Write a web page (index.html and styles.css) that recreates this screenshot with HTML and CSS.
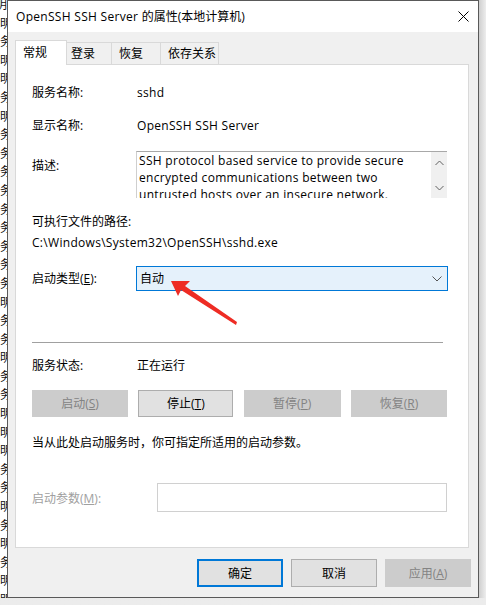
FILE: index.html
```html
<!DOCTYPE html>
<html lang="zh-CN">
<head>
<meta charset="utf-8">
<title>OpenSSH SSH Server 的属性(本地计算机)</title>
<link rel="stylesheet" href="styles.css">
</head>
<body>
<div class="desk">
  <div class="strip">明<br>明<br>务<br>明<br>明<br>务<br>明<br>务<br>务<br>务<br>务<br>务<br>务<br>务<br>务<br>务<br>明<br>务<br>务<br>明<br>务<br>务<br>明<br>明<br>明<br>务<br>务<br>明<br>务<br>明<br>务<br>明<br>明</div>
  <div class="window">
    <div class="titlebar">
      <span class="title"><span class="en">OpenSSH SSH Server </span>的属性(本地计算机)</span>
      <svg class="close" width="11" height="11" viewBox="0 0 11 11"><path d="M0.5 0.5 L10.5 10.5 M10.5 0.5 L0.5 10.5" stroke="#000" stroke-width="1" fill="none"/></svg>
    </div>
    <div class="client">
      <div class="tabs">
        <div class="tab sel t1">常规</div>
        <div class="tab t2">登录</div>
        <div class="tab t3">恢复</div>
        <div class="tab t4">依存关系</div>
      </div>
      <div class="panel">
        <div class="row">
          <span class="lbl">服务名称:</span><span class="val en">sshd</span>
        </div>
        <div class="row m16">
          <span class="lbl">显示名称:</span><span class="val en">OpenSSH SSH Server</span>
        </div>
        <div class="row m17">
          <span class="lbl desc-lbl">描述:</span>
          <div class="memo">
            <div class="memo-text en">SSH protocol based service to provide secure<br>encrypted communications between two<br>untrusted hosts over an insecure network.</div>
            <div class="memo-scroll">
              <svg width="9" height="6" viewBox="0 0 9 6"><path d="M0.5 5 L4.5 1 L8.5 5" stroke="#606060" fill="none"/></svg>
              <svg width="9" height="6" viewBox="0 0 9 6"><path d="M0.5 1 L4.5 5 L8.5 1" stroke="#606060" fill="none"/></svg>
            </div>
          </div>
        </div>
        <div class="line m15">可执行文件的路径:</div>
        <div class="line m4 en">C:\Windows\System32\OpenSSH\sshd.exe</div>
        <div class="row combo-row m15">
          <span class="lbl">启动类型(<u>E</u>):</span>
          <div class="combo">
            <span>自动</span>
            <svg width="10" height="6" viewBox="0 0 10 6"><path d="M0.5 0.5 L5 5 L9.5 0.5" stroke="#555" fill="none"/></svg>
          </div>
        </div>
        <div class="sep"></div>
        <div class="row m14">
          <span class="lbl">服务状态:</span><span class="val">正在运行</span>
        </div>
        <div class="svc-buttons">
          <div class="btn disabled">启动(<u>S</u>)</div>
          <div class="btn">停止(<u>T</u>)</div>
          <div class="btn disabled">暂停(<u>P</u>)</div>
          <div class="btn disabled">恢复(<u>R</u>)</div>
        </div>
        <div class="line m17">当从此处启动服务时，你可指定所适用的启动参数。</div>
        <div class="params">
          <span class="lbl grey">启动参数(<u>M</u>):</span>
          <div class="input"></div>
        </div>
      </div>
      <div class="actions">
        <div class="btn dlg default">确定</div>
        <div class="btn dlg">取消</div>
        <div class="btn dlg disabled">应用(<u>A</u>)</div>
      </div>
    </div>
  </div>
  <div class="shadow"></div>
</div>
<svg class="arrow" width="486" height="605" viewBox="0 0 486 605">
  <polygon points="171,281 190,281 185,286 237,322 236,325 181,290 178,296" fill="#ee2c24"/>
</svg>
</body>
</html>
```
FILE: styles.css
```css
html, body {
  margin: 0;
  padding: 0;
  width: 486px;
  height: 605px;
  overflow: hidden;
}
body {
  position: relative;
  background: linear-gradient(#d9d9d9, #ececec);
  font-family: "Open Sans", "Noto Sans CJK SC", sans-serif;
  font-size: 12px;
  color: #000;
}
u { text-decoration: underline; text-underline-offset: 1px; }
.en { letter-spacing: 0.3px; }

.desk {
  display: grid;
  grid-template-columns: 7px 472px 7px;
  height: 598px;
}
.strip {
  background: #fff;
  overflow: hidden;
  font-family: "Noto Sans CJK SC", sans-serif;
  font-size: 12px;
  line-height: 18.6px;
  text-indent: -5px;
  margin-top: -5px;
  color: #111;
  white-space: nowrap;
}
.shadow {
  background: linear-gradient(to right, #cfcfcf, #ededed);
}

.window {
  box-sizing: border-box;
  height: 598px;
  border: 1px solid #595959;
  background: #f0f0f0;
  display: flex;
  flex-direction: column;
}
.titlebar {
  height: 31px;
  flex: none;
  background: #fff;
  display: flex;
  align-items: center;
  justify-content: space-between;
  padding: 0 9px 1px 8px;
  box-sizing: border-box;
}
.title { line-height: 17px; }
.close { display: block; margin-top: 1px; }

.client {
  flex: 1;
  padding: 8px 7px 0 7px;
}
.tabs {
  display: flex;
  align-items: flex-start;
  height: 24px;
}
.tab {
  box-sizing: border-box;
  height: 22px;
  margin-top: 2px;
  line-height: 21px;
  background: #f0f0f0;
  border-top: 1px solid #d9d9d9;
  border-right: 1px solid #d9d9d9;
  white-space: nowrap;
}
.tab.sel {
  position: relative;
  z-index: 1;
  height: 25px;
  margin-top: 0;
  line-height: 23px;
  background: #fff;
  border-left: 1px solid #d9d9d9;
}
.t1 { width: 52px; padding-left: 7px; }
.t2 { width: 45px; padding-left: 4px; }
.t3 { width: 49px; padding-left: 7px; }
.t4 { width: 58px; padding-left: 7px; }

.panel {
  box-sizing: border-box;
  width: 454px;
  height: 484px;
  background: #fff;
  border: 1px solid #d9d9d9;
  padding: 19px 20px 0 16px;
}
.row {
  display: grid;
  grid-template-columns: 104px 1fr;
  line-height: 17px;
}
.val { padding-left: 1px; white-space: nowrap; }
.line { line-height: 17px; white-space: nowrap; }
.m4 { margin-top: 4px; }
.m14 { margin-top: 14px; }
.m15 { margin-top: 15px; }
.m16 { margin-top: 16px; }
.m17 { margin-top: 17px; }

.desc-lbl { padding-top: 6px; }
.memo {
  box-sizing: border-box;
  width: 311px;
  height: 47px;
  border-top: 1px solid #a8a8a8;
  border-left: 1px solid #cfcfcf;
  display: flex;
  overflow: hidden;
}
.memo-text {
  flex: 1;
  padding-left: 2px;
  white-space: nowrap;
  overflow: hidden;
}
.memo-scroll {
  width: 16px;
  flex: none;
  background: #f0f0f0;
  display: flex;
  flex-direction: column;
  align-items: center;
  justify-content: space-between;
  padding: 8px 0 7px;
  box-sizing: border-box;
}
.memo-scroll svg { display: block; }

.combo-row { line-height: 25px; }
.combo {
  box-sizing: border-box;
  width: 312px;
  height: 25px;
  background: #e5f1fb;
  border: 1px solid #0078d7;
  display: flex;
  align-items: center;
  justify-content: space-between;
  padding: 0 5px 0 3px;
  line-height: 17px;
}
.combo svg { display: block; }

.sep {
  margin-top: 51px;
  width: 411px;
  height: 1px;
  background: #a0a0a0;
}

.svc-buttons {
  margin-top: 16px;
  width: 415px;
  display: grid;
  grid-template-columns: 96px 95px 97px 96px;
  justify-content: space-between;
}
.btn {
  box-sizing: border-box;
  height: 27px;
  border: 1px solid #adadad;
  background: #e1e1e1;
  display: flex;
  align-items: center;
  justify-content: center;
  line-height: 17px;
  white-space: nowrap;
}
.btn.disabled {
  background: #cccccc;
  border-color: #cccccc;
  color: #838383;
}

.params {
  margin-top: 32px;
  display: grid;
  grid-template-columns: 125px 290px;
  line-height: 29px;
}
.grey { color: #a0a0a0; padding-top: 1px; }
.input {
  box-sizing: border-box;
  height: 29px;
  border: 1px solid #d0d0d0;
  background: #fff;
}

.actions {
  margin-top: 11px;
  display: flex;
  justify-content: flex-end;
  gap: 8px;
}
.btn.dlg { width: 86px; height: 28px; }
.btn.default { border: 2px solid #0078d7; }

.arrow {
  position: absolute;
  left: 0;
  top: 0;
  pointer-events: none;
}
```
